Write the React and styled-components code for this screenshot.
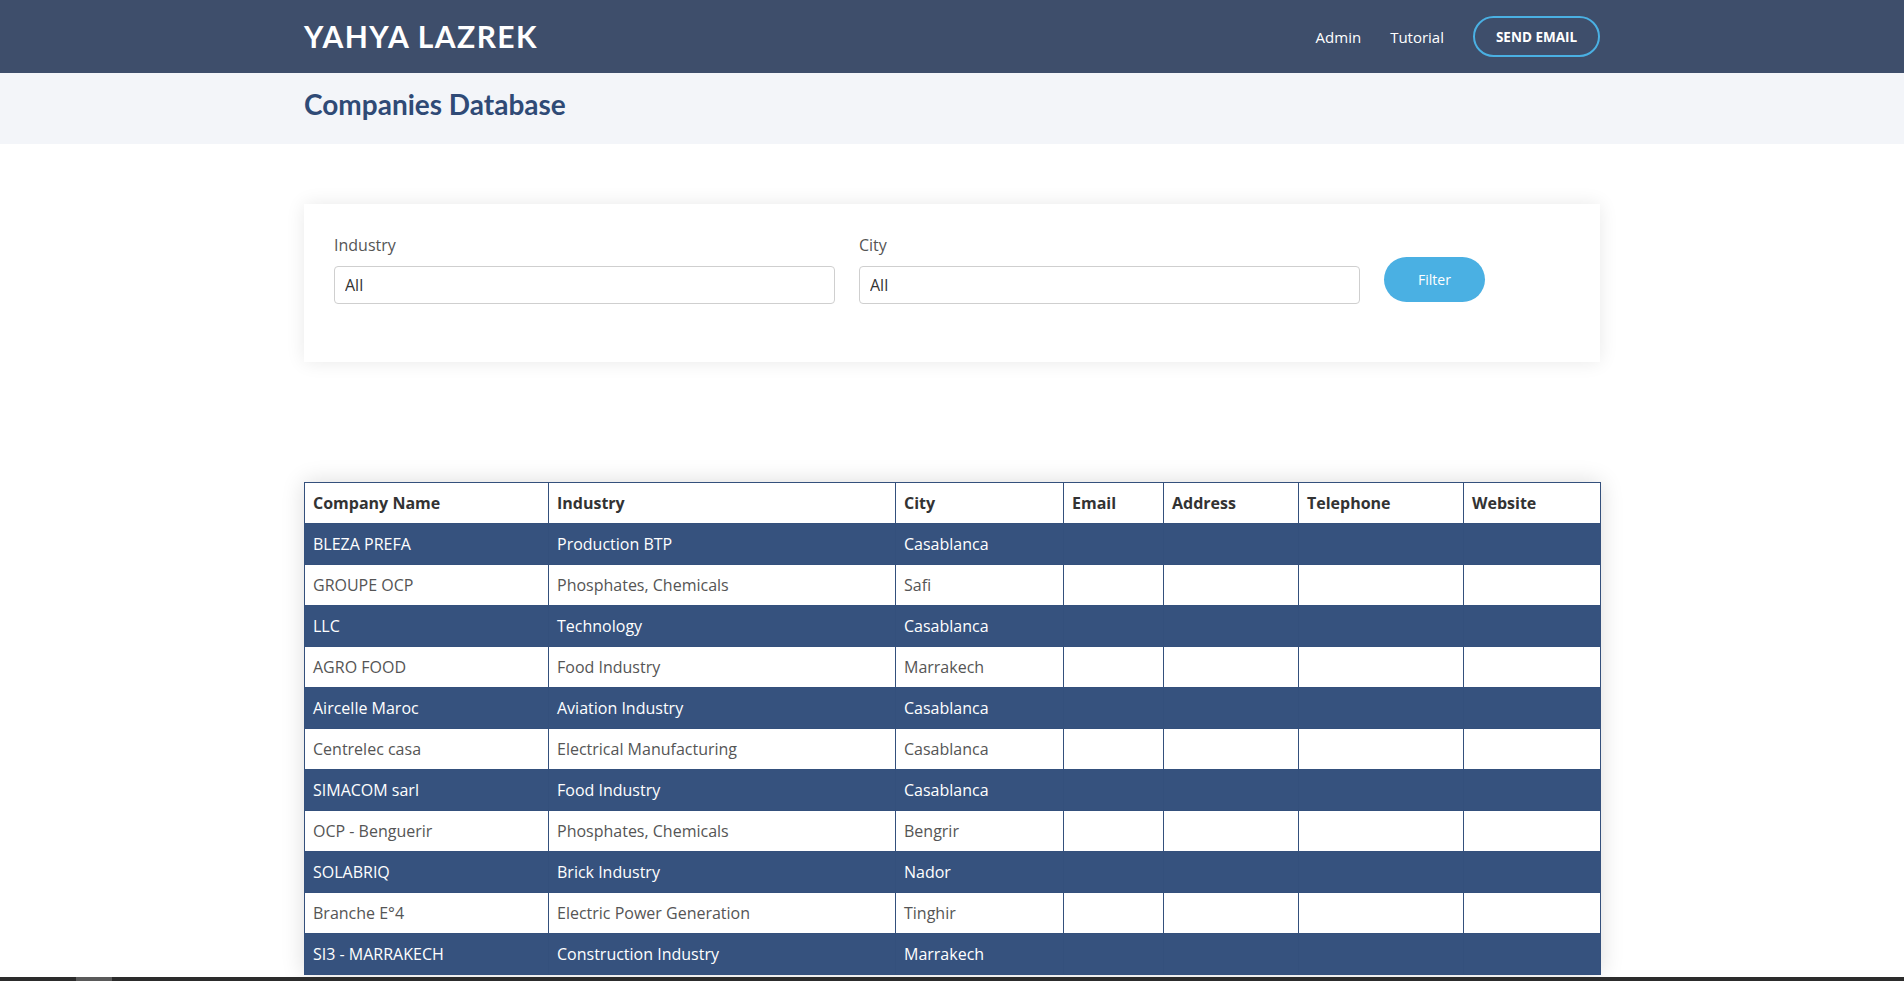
import styled, { createGlobalStyle } from "styled-components";

const GlobalStyle = createGlobalStyle`
  html {
    scrollbar-width: none;
  }
  html::-webkit-scrollbar {
    display: none;
  }
  body {
    margin: 0;
    background: #fff;
    font-family: "Open Sans", "Noto Sans", Arial, sans-serif;
    color: #555;
  }
  * {
    box-sizing: border-box;
  }
`;

const companies = [
  { name: "BLEZA PREFA", industry: "Production BTP", city: "Casablanca" },
  { name: "GROUPE OCP", industry: "Phosphates, Chemicals", city: "Safi" },
  { name: "LLC", industry: "Technology", city: "Casablanca" },
  { name: "AGRO FOOD", industry: "Food Industry", city: "Marrakech" },
  { name: "Aircelle Maroc", industry: "Aviation Industry", city: "Casablanca" },
  { name: "Centrelec casa", industry: "Electrical Manufacturing", city: "Casablanca" },
  { name: "SIMACOM sarl", industry: "Food Industry", city: "Casablanca" },
  { name: "OCP - Benguerir", industry: "Phosphates, Chemicals", city: "Bengrir" },
  { name: "SOLABRIQ", industry: "Brick Industry", city: "Nador" },
  { name: "Branche E°4", industry: "Electric Power Generation", city: "Tinghir" },
  { name: "SI3 - MARRAKECH", industry: "Construction Industry", city: "Marrakech" },
];

const columns = [
  { label: "Company Name", width: 244 },
  { label: "Industry", width: 347 },
  { label: "City", width: 168 },
  { label: "Email", width: 100 },
  { label: "Address", width: 135 },
  { label: "Telephone", width: 165 },
  { label: "Website", width: 137 },
];

export default function App() {
  return (
    <>
      <GlobalStyle />
      <Navbar>
        <Container>
          <Logo>YAHYA LAZREK</Logo>
          <NavLinks>
            <NavLink href="#">Admin</NavLink>
            <NavLink href="#">Tutorial</NavLink>
            <EmailButton>SEND EMAIL</EmailButton>
          </NavLinks>
        </Container>
      </Navbar>

      <TitleBand>
        <Container>
          <PageTitle>Companies Database</PageTitle>
        </Container>
      </TitleBand>

      <Main>
        <FilterCard>
          <FilterGrid>
            <Field>
              <Label>Industry</Label>
              <Select defaultValue="All">
                <option>All</option>
              </Select>
            </Field>
            <Field>
              <Label>City</Label>
              <Select defaultValue="All">
                <option>All</option>
              </Select>
            </Field>
            <div>
              <FilterButton>Filter</FilterButton>
            </div>
          </FilterGrid>
        </FilterCard>

        <Table>
          <colgroup>
            {columns.map((c) => (
              <col key={c.label} style={{ width: c.width }} />
            ))}
          </colgroup>
          <thead>
            <tr>
              {columns.map((c) => (
                <Th key={c.label}>{c.label}</Th>
              ))}
            </tr>
          </thead>
          <tbody>
            {companies.map((c, i) => (
              <Row key={c.name} $dark={i % 2 === 0}>
                <Td>{c.name}</Td>
                <Td>{c.industry}</Td>
                <Td>{c.city}</Td>
                <Td />
                <Td />
                <Td />
                <Td />
              </Row>
            ))}
          </tbody>
        </Table>
      </Main>

      <BottomBar>
        <BottomThumb />
      </BottomBar>
    </>
  );
}

const Container = styled.div`
  width: 1296px;
  margin: 0 auto;
  display: flex;
  align-items: center;
  justify-content: space-between;
`;

const Navbar = styled.nav`
  height: 73px;
  background: #3e4e6b;
  display: flex;
  align-items: center;
`;

const Logo = styled.div`
  font-family: Lato, "Open Sans", sans-serif;
  font-weight: 700;
  font-size: 30px;
  letter-spacing: 1.4px;
  color: #fff;
  margin-top: -2px;
`;

const NavLinks = styled.div`
  display: flex;
  align-items: center;
  gap: 29px;
`;

const NavLink = styled.a`
  color: #fff;
  font-size: 15px;
  text-decoration: none;
`;

const EmailButton = styled.button`
  height: 41px;
  width: 127px;
  border: 2px solid #4ab0e3;
  border-radius: 21px;
  background: transparent;
  color: #fff;
  font-family: "Open Sans", sans-serif;
  font-weight: 700;
  font-size: 13.5px;
`;

const TitleBand = styled.div`
  height: 71px;
  background: #f3f5f9;
  display: flex;
  align-items: center;
`;

const PageTitle = styled.h1`
  margin: -9px 0 0;
  font-family: Lato, "Open Sans", sans-serif;
  font-weight: 700;
  font-size: 28px;
  color: #2f4a76;
`;

const Main = styled.main`
  width: 1296px;
  margin: 60px auto 40px;
`;

const FilterCard = styled.section`
  background: #fff;
  padding: 29px 30px 58px;
  box-shadow: 0 0 18px rgba(0, 0, 0, 0.09);
`;

const FilterGrid = styled.div`
  display: grid;
  grid-template-columns: 501px 501px 1fr;
  column-gap: 24px;
`;

const Field = styled.div`
  display: flex;
  flex-direction: column;
`;

const Label = styled.label`
  font-size: 16px;
  line-height: 24px;
  color: #555;
  margin-bottom: 9px;
`;

const Select = styled.select`
  height: 38px;
  border: 1px solid #cfcfcf;
  border-radius: 4px;
  padding: 0 10px;
  font-family: "Open Sans", sans-serif;
  font-size: 16px;
  color: #333;
  background: #fff;
  appearance: none;
`;

const FilterButton = styled.button`
  margin-top: 24px;
  width: 101px;
  height: 45px;
  border: none;
  border-radius: 23px;
  background: #4ab0e3;
  color: #fff;
  font-family: "Open Sans", sans-serif;
  font-size: 14px;
`;

const Table = styled.table`
  margin-top: 120px;
  width: 1296px;
  table-layout: fixed;
  border-collapse: collapse;
  border: 1px solid #34507c;
  box-shadow: 0 0 22px rgba(0, 0, 0, 0.14);
`;

const Th = styled.th`
  height: 41px;
  padding: 0 8px;
  text-align: left;
  font-size: 16px;
  font-weight: 700;
  color: #333;
  background: #fff;
  border: 1px solid #34507c;
`;

const Row = styled.tr`
  background: ${(p) => (p.$dark ? "#36527e" : "#fff")};
  color: ${(p) => (p.$dark ? "#fff" : "#555")};
`;

const Td = styled.td`
  height: 41px;
  padding: 0 8px;
  font-size: 16px;
  border: 1px solid #34507c;
  white-space: nowrap;
`;

const BottomBar = styled.div`
  position: fixed;
  left: 0;
  right: 0;
  bottom: 0;
  height: 4px;
  background: #2c2c2c;
`;

const BottomThumb = styled.div`
  margin-left: 76px;
  width: 36px;
  height: 4px;
  background: #5a5a5a;
`;
